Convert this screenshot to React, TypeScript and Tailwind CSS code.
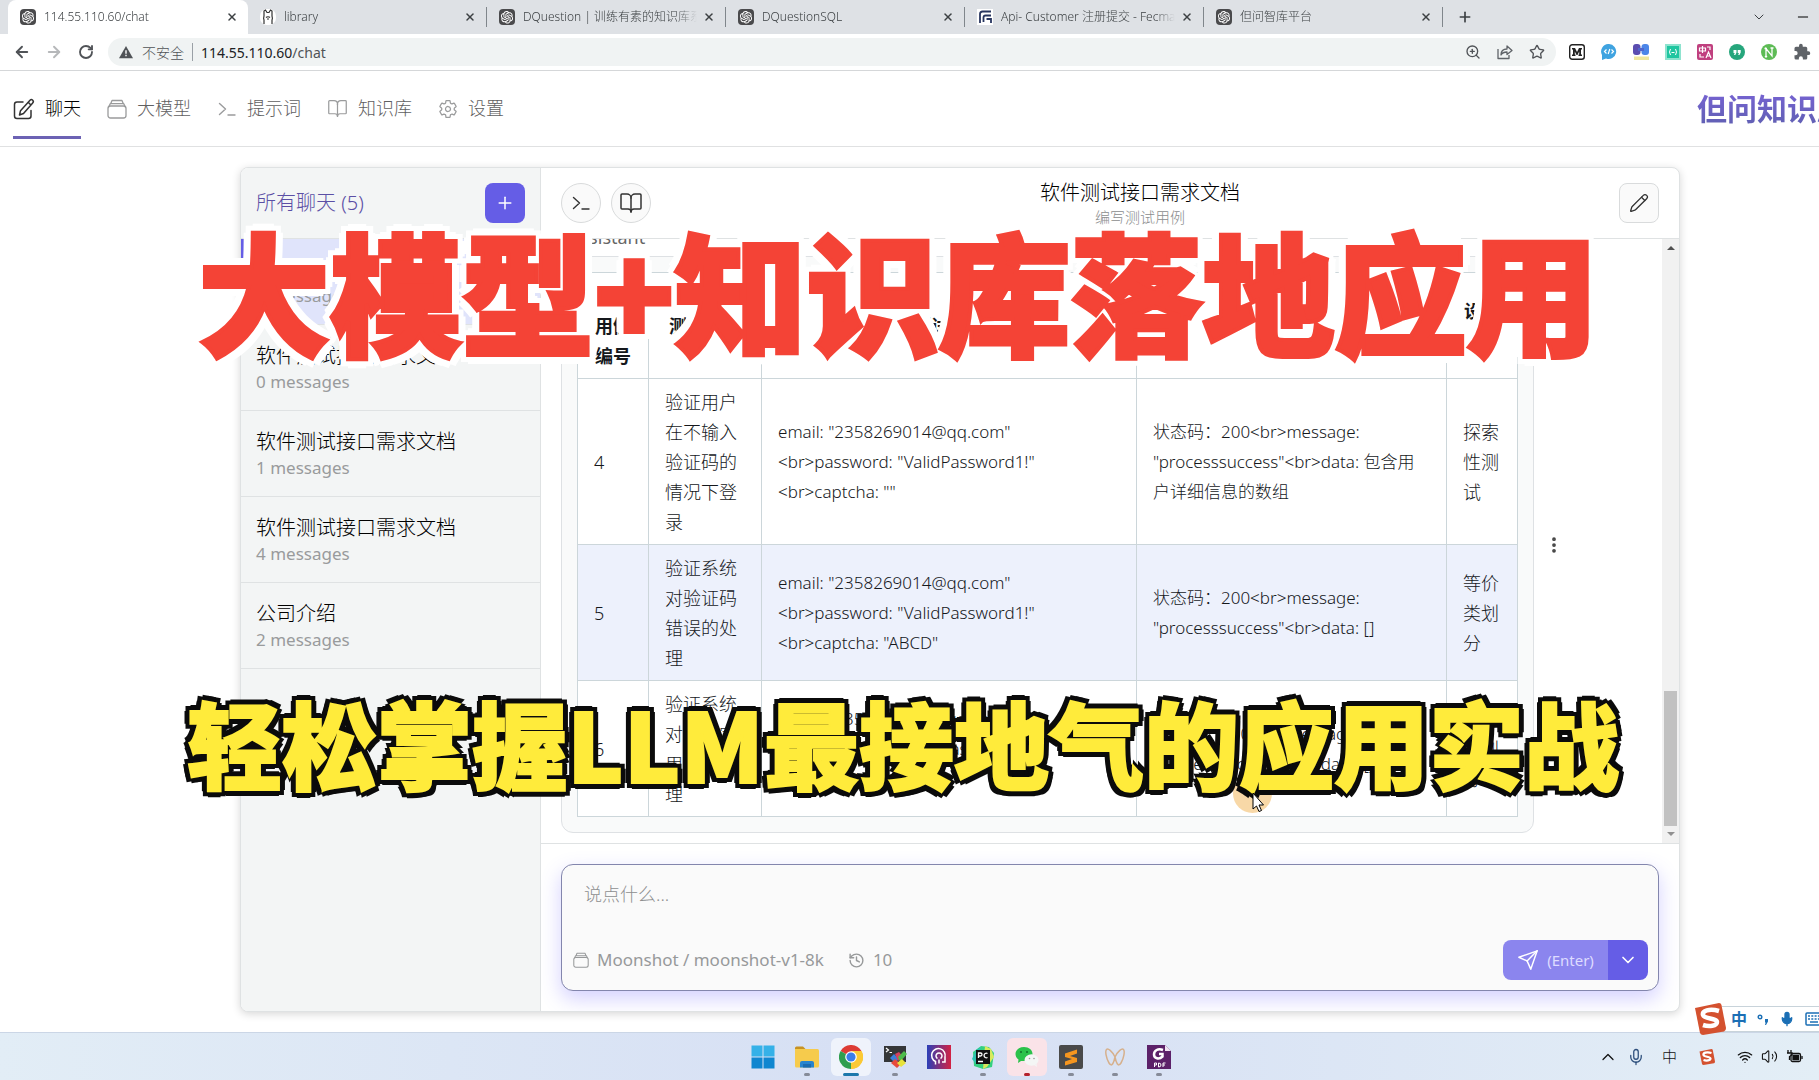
import React from 'react'
import {
    ArrowLeft,
    ArrowRight,
    BookOpen,
    ChevronDown,
    ChevronUp,
    EllipsisVertical,
    History,
    Mic,
    Minus,
    Pencil,
    Plus,
    RotateCw,
    SquarePen,
    Star,
    Volume2,
    Wifi,
    X,
    ZoomIn
} from 'lucide-react'
import { AiOutlineOpenAI } from 'react-icons/ai'
import { FiSend } from 'react-icons/fi'
import { IoSettingsOutline } from 'react-icons/io5'

const OpenAiBadge = () => (
    <span className="flex size-4 shrink-0 items-center justify-center rounded-sm bg-[#4a4a4c] text-white">
        <AiOutlineOpenAI className="size-4" />
    </span>
)

const LlamaBadge = () => (
    <svg viewBox="0 0 16 16" className="size-4 shrink-0">
        <rect width="16" height="16" rx="7" fill="#fff" />
        <path
            d="M4 15v-4c-1-2 0-3 0-4V2l1.500-1L7 3.500h2L10.500 1 12 2v5c0 1 1 2 0 4v4M6 8.500c1-1 3-1 4 0M7 10h2"
            fill="none"
            stroke="#333"
            strokeWidth="1.200"
        />
    </svg>
)

const ApiBadge = () => (
    <svg viewBox="0 0 16 16" className="size-4 shrink-0">
        <rect width="16" height="16" fill="#fff" />
        <path d="M3 14V5q0-2.500 2.500-2.500H14M6.500 13V8.500q0-2 2-2H14M9.500 10H14v4" fill="none" stroke="#27355f" strokeWidth="1.800" />
    </svg>
)

const tabs = [
    { title: '114.55.110.60/chat', icon: <OpenAiBadge />, active: true },
    { title: 'library', icon: <LlamaBadge /> },
    { title: 'DQuestion | 训练有素的知识库系统', icon: <OpenAiBadge /> },
    { title: 'DQuestionSQL', icon: <OpenAiBadge /> },
    { title: 'Api- Customer 注册提交 - Fecmall', icon: <ApiBadge /> },
    { title: '但问智库平台', icon: <OpenAiBadge /> }
]

function TabStrip() {
    return (
        <div className="flex h-[34px] items-stretch bg-[#dee1e5] pl-2 text-[12px] text-[#3c4043]">
            {tabs.map((tab, i) => (
                <div
                    key={tab.title}
                    className={
                        tab.active
                            ? 'flex w-60 items-center rounded-t-lg bg-white pr-2 pl-3'
                            : 'flex w-[239px] items-center pl-3'
                    }
                >
                    {tab.icon}
                    <span className="ml-2 flex-1 overflow-hidden whitespace-nowrap [mask-image:linear-gradient(to_right,#000_88%,transparent)]">
                        {tab.title}
                    </span>
                    <button aria-label="Close tab" className="ml-1 flex size-4 items-center justify-center">
                        <X className="size-3" strokeWidth={3} />
                    </button>
                    {i > 0 && <span className="ml-2 h-5 w-px bg-[#80868b]" />}
                </div>
            ))}
            <button aria-label="New tab" className="ml-[10px] flex w-6 items-center justify-center">
                <Plus className="size-4" strokeWidth={2.5} />
            </button>
            <div className="ml-auto flex items-center">
                <ChevronDown className="mr-7 size-4" strokeWidth={1.5} />
                <Minus className="mr-2 size-4 text-black" strokeWidth={1.5} />
            </div>
        </div>
    )
}

const ShareIcon = () => (
    <svg viewBox="0 0 16 16" className="size-4" fill="none" stroke="#5f6368" strokeWidth="1.300">
        <path d="M1 5v9.500h11V11M4 11c0-4 2-6 6-6V2l5 4.500-5 4V8c-3 0-5 1-6 3z" strokeLinejoin="round" />
    </svg>
)

function Extensions() {
    return (
        <div className="flex items-center gap-4">
            <svg viewBox="0 0 16 16" className="size-4">
                <rect x=".7" y=".7" width="14.600" height="14.600" rx="2.500" fill="#fff" stroke="#222" strokeWidth="1.400" />
                <path d="M3 4h3l2 4 2-4h3v1.500h-1v5h1V12H9.500v-1.500h.7V7.500L8.500 11h-1L5.800 7.500v3h.7V12H3v-1.500h1v-5H3z" fill="#222" />
            </svg>
            <svg viewBox="0 0 16 16" className="size-4">
                <path d="M8 0a7.500 7.500 0 1 1-3 14.500L1 16V11A7.500 7.500 0 0 1 8 0z" fill="#3fa3e0" />
                <path d="M5.500 5.500 3.500 7.500l2 2M10.500 5.500l2 2-2 2M8.800 5 7.200 10" fill="none" stroke="#fff" strokeWidth="1.200" />
            </svg>
            <svg viewBox="0 0 16 16" className="size-4">
                <rect width="7.500" height="11" rx="3" fill="#5b4db0" />
                <rect x="8.500" width="7.500" height="11" rx="3" fill="#4c86e8" />
                <rect x="5" y="4" width="6" height="3" fill="#5066cc" />
                <rect x="1" y="12.500" width="15" height="3.500" fill="#efe79d" />
            </svg>
            <svg viewBox="0 0 16 16" className="size-4">
                <rect width="16" height="16" fill="#8fe3cf" />
                <rect x="2" y="2" width="12" height="12" fill="#1fc6a0" />
                <path d="M5.500 5Q3.500 8 5.500 11M10.500 5q2 3 0 6M6.500 8.500h3" fill="none" stroke="#fff" />
            </svg>
            <svg viewBox="0 0 16 16" className="size-4">
                <rect width="16" height="16" rx="2" fill="#c0407f" />
                <path d="M2.500 4h6v3h-6zM5.500 2v7M9 14l2.500-6 2.500 6M10 12h3M10 3h3v3M3 10v3h4" fill="none" stroke="#fff" strokeWidth="1.200" />
            </svg>
            <svg viewBox="0 0 16 16" className="size-4">
                <circle cx="8" cy="8" r="8" fill="#26a67c" />
                <path d="M4.500 6h3v2.500L6.300 11H5l.7-2H4.500zM8.700 6h3v2.500L10.500 11H9.200l.7-2H8.700z" fill="#fff" />
            </svg>
            <svg viewBox="0 0 16 16" className="size-4">
                <circle cx="8" cy="8" r="8" fill="#5dbb55" />
                <path d="M5 12.500v-8l6 7.500V4M3.500 4.500H6M9.500 4h3M4 12l1 1 1-1" fill="none" stroke="#fff" strokeWidth="1.300" />
            </svg>
            <svg viewBox="0 0 24 24" className="size-[18px] fill-[#5f6368]">
                <path d="M20.500 11H19V7a2 2 0 0 0-2-2h-4V3.500a2.500 2.500 0 0 0-5 0V5H4a2 2 0 0 0-2 2v3.800h1.500a2.700 2.700 0 0 1 0 5.400H2V20a2 2 0 0 0 2 2h3.800v-1.500a2.700 2.700 0 0 1 5.400 0V22H17a2 2 0 0 0 2-2v-4h1.500a2.500 2.500 0 0 0 0-5z" />
            </svg>
        </div>
    )
}

function AddressBar() {
    return (
        <div className="flex h-[37px] items-center border-b border-[#d5d7d9] bg-white pr-2 pl-[13px] text-[#505357]">
            <button aria-label="Back">
                <ArrowLeft className="size-[18px]" strokeWidth={2.5} />
            </button>
            <button aria-label="Forward" className="ml-[14px] text-[#b6b8ba]">
                <ArrowRight className="size-[18px]" strokeWidth={2.5} />
            </button>
            <button aria-label="Reload" className="ml-[15px]">
                <RotateCw className="size-4" strokeWidth={2.8} />
            </button>
            <div className="ml-[14px] flex h-7 flex-1 items-center rounded-full bg-[#f0f3f3] px-[11px] text-[14px]">
                <svg viewBox="0 0 16 16" className="size-[14px]">
                    <path d="M8 1 16 15H0z" fill="#505357" />
                    <path d="M7.200 6h1.600v4H7.200zM7.200 11.200h1.600v1.600H7.200z" fill="#fff" />
                </svg>
                <span className="ml-[9px]">不安全</span>
                <span className="mx-2 h-[18px] w-px bg-[#9aa0a6]" />
                <span className="font-normal">
                    <span className="text-[#202124]">114.55.110.60</span>/chat
                </span>
                <div className="ml-auto flex items-center gap-4">
                    <ZoomIn className="size-4" />
                    <ShareIcon />
                    <Star className="size-4" />
                </div>
            </div>
            <div className="ml-[13px]">
                <Extensions />
            </div>
        </div>
    )
}

const ModelIcon = ({ className }: { className: string }) => (
    <svg viewBox="0 0 20 20" className={className} fill="none" stroke="currentColor" strokeWidth="1.300" strokeLinecap="round">
        <rect x="1" y="7" width="18" height="12" rx="2.500" />
        <path d="M2 7.500 3.200 4.700h13.600L18 7.500M3.800 4.500 5 1.500h10l1.200 3" strokeLinejoin="round" />
    </svg>
)

const PromptIcon = ({ className }: { className: string }) => (
    <svg viewBox="0 0 20 20" className={className} fill="none" stroke="currentColor" strokeWidth="1.400" strokeLinecap="round" strokeLinejoin="round">
        <path d="m2.500 4.500 6 5.500-6 5.500M11 16h7" />
    </svg>
)

// square with a broad rounded pencil across its corner
const ComposeIcon = ({ className }: { className: string }) => (
    <svg viewBox="0 0 22 22" className={className} fill="none" stroke="currentColor" strokeWidth="1.500" strokeLinecap="round" strokeLinejoin="round">
        <path d="M10 4H4a2.500 2.500 0 0 0-2.500 2.500V18A2.500 2.500 0 0 0 4 20.500h11.500A2.500 2.500 0 0 0 18 18v-5.500" />
        <path d="M17 2.200a1.900 1.900 0 0 1 2.700 2.700L10.500 15.500 6.500 17l1-4.300zM15.200 4.300l2.700 2.700" />
    </svg>
)

const navItems = [
    { label: '聊天', icon: <ComposeIcon className="size-[22px] text-[#333]" />, active: true },
    { label: '大模型', icon: <ModelIcon className="size-5" /> },
    { label: '提示词', icon: <PromptIcon className="size-5" /> },
    { label: '知识库', icon: <BookOpen className="size-[21px]" strokeWidth={1.4} /> },
    { label: '设置', icon: <IoSettingsOutline className="size-5" /> }
]

function Nav() {
    return (
        <nav className="flex h-[76px] items-center border-b border-[#e0e1e2] bg-white pl-[13px] text-[18px]">
            <div className="flex gap-[26px]">
                {navItems.map((item) => (
                    <a
                        key={item.label}
                        href="#"
                        className={
                            item.active
                                ? 'flex h-[60px] items-center gap-[10px] border-b-[3px] border-[#6c62b4] pt-[3px] text-black'
                                : 'flex h-[60px] items-center gap-[10px] border-b-[3px] border-transparent pt-[3px] text-[#5f6061]'
                        }
                    >
                        <span className={item.active ? '' : 'text-[#9a9b9c]'}>{item.icon}</span>
                        {item.label}
                    </a>
                ))}
            </div>
            <div className="ml-auto w-[122px] overflow-hidden bg-gradient-to-b from-[#7a63d8] to-[#5d5fae] bg-clip-text text-[30px] font-bold whitespace-nowrap text-transparent">
                但问知识库
            </div>
        </nav>
    )
}

const chats = [
    { title: '软件测试接口需求文档', count: 4, active: true },
    { title: '软件测试接口需求文档', count: 0 },
    { title: '软件测试接口需求文档', count: 1 },
    { title: '软件测试接口需求文档', count: 4 },
    { title: '公司介绍', count: 2 }
]

function Sidebar() {
    return (
        <aside className="flex w-[300px] shrink-0 flex-col border-r border-[#dfe2e3] bg-[#f3f5f5]">
            <div className="flex h-[71px] items-center justify-between border-b border-[#dfe2e3] px-[15px]">
                <h2 className="text-[20px] text-[#5b4fa5]">所有聊天 (5)</h2>
                <button aria-label="New chat" className="flex size-10 items-center justify-center rounded-lg bg-[#655de6] text-white">
                    <Plus className="size-5" strokeWidth={1.8} />
                </button>
            </div>
            {chats.map((chat, i) => (
                <a
                    key={i}
                    href="#"
                    className={
                        chat.active
                            ? 'block border-b border-l-[3px] border-b-[#dfe2e3] border-l-[#655de6] bg-[#e0e4fb] py-4 pr-4 pl-3'
                            : 'block border-b border-[#dfe2e3] py-4 pr-4 pl-[15px]'
                    }
                >
                    <div className="text-[20px] leading-[29px] text-black">{chat.title}</div>
                    <div className="text-[17px] leading-6 font-normal text-[#999b9c]">{chat.count} messages</div>
                </a>
            ))}
        </aside>
    )
}

const columns = ['测试用例编号', '测试标题', '测试数据', '预期结果', '设计方法']

const cases = [
    {
        id: 4,
        title: '验证用户在不输入验证码的情况下登录',
        input: ['email: "2358269014@qq.com"', '<br>password: "ValidPassword1!"', '<br>captcha: ""'],
        expected: ['状态码：200<br>message:', '"processsuccess"<br>data: 包含用', '户详细信息的数组'],
        method: '探索性测试'
    },
    {
        id: 5,
        title: '验证系统对验证码错误的处理',
        input: ['email: "2358269014@qq.com"', '<br>password: "ValidPassword1!"', '<br>captcha: "ABCD"'],
        expected: ['状态码：200<br>message:', '"processsuccess"<br>data: []'],
        method: '等价类划分'
    },
    {
        id: 6,
        title: '验证系统对已锁定用户的处理',
        input: ['email: "2358269014@qq.com"', '<br>password: "ValidPassword1!"', '<br>captcha: "ABCD"'],
        expected: ['状态码：200<br>message:', '"processsuccess"<br>data: []'],
        method: '等价类划分'
    }
]

const Lines = ({ items }: { items: string[] }) => (
    <>
        {items.map((line, i) => (
            <div key={i} className="whitespace-nowrap">
                {line}
            </div>
        ))}
    </>
)

function CaseTable() {
    return (
        <table className="w-full table-fixed border-collapse bg-white text-[18px] leading-[30px] text-[#15181c]">
            <colgroup>
                <col className="w-[71px]" />
                <col className="w-[113px]" />
                <col className="w-[375px]" />
                <col />
                <col className="w-[71px]" />
            </colgroup>
            <thead>
                <tr>
                    {columns.map((name) => (
                        <th key={name} className="border border-[#ccd6da] px-[15px] pt-2 pb-[7px] font-bold">
                            {name}
                        </th>
                    ))}
                </tr>
            </thead>
            <tbody className="[&_td]:border [&_td]:border-[#ccd6da] [&_td]:px-4 [&_td]:pt-2 [&_td]:pb-[7px]">
                {cases.map((row) => (
                    <tr key={row.id} className="even:bg-[#edf1fc]">
                        <td>{row.id}</td>
                        <td>{row.title}</td>
                        <td className="text-[17px]">
                            <Lines items={row.input} />
                        </td>
                        <td className="text-[17px]">
                            <Lines items={row.expected} />
                        </td>
                        <td>{row.method}</td>
                    </tr>
                ))}
            </tbody>
        </table>
    )
}

function ChatHeader() {
    return (
        <header className="flex h-[71px] shrink-0 items-center gap-[10px] border-b border-[#dfe2e3] px-5">
            <button aria-label="Prompt" className="flex size-10 items-center justify-center rounded-full border border-[#d9dbdc] bg-[#fafafa] text-[#333]">
                <PromptIcon className="size-5" />
            </button>
            <button aria-label="Knowledge base" className="flex size-10 items-center justify-center rounded-full border border-[#d9dbdc] bg-[#fafafa] text-[#333]">
                <BookOpen className="size-6" strokeWidth={1.5} />
            </button>
            <div className="-mr-[10px] flex-1 text-center">
                <h1 className="text-[20px] leading-7 text-black">软件测试接口需求文档</h1>
                <p className="text-[15px] leading-5 text-[#8b8d8e]">编写测试用例</p>
            </div>
            <button aria-label="Edit" className="flex size-10 items-center justify-center rounded-lg border border-[#d9dbdc] bg-[#fafafa] text-[#333]">
                <Pencil className="size-5" strokeWidth={1.6} />
            </button>
        </header>
    )
}

function Messages() {
    return (
        <div className="flex min-h-0 flex-1">
            <div className="flex flex-1 flex-col justify-end overflow-hidden pb-[10px] pl-5">
                <div className="mb-[7px] pl-2 text-[18px] leading-6 font-normal text-[#666]">Assistant</div>
                <div className="flex items-center pr-[98px]">
                    <div className="flex-1 rounded-xl border border-[#dee1e4] bg-[#f9fafa] p-[15px]">
                        <CaseTable />
                    </div>
                    <button aria-label="More" className="ml-[10px] text-[#444]">
                        <EllipsisVertical className="size-5" strokeWidth={2.5} />
                    </button>
                </div>
            </div>
            <div className="flex w-[17px] flex-col items-center bg-[#f1f1f1] py-1">
                <svg viewBox="0 0 8 8" className="mt-px size-2">
                    <path d="M0 6 4 2l4 4z" fill="#505050" />
                </svg>
                <div className="mt-auto mb-1 h-[135px] w-[13px] bg-[#c1c1c1]" />
                <svg viewBox="0 0 8 8" className="mb-px size-2">
                    <path d="M0 2 4 6l4-4z" fill="#909090" />
                </svg>
            </div>
        </div>
    )
}

function Composer() {
    return (
        <div className="border-t border-[#dfe2e3] px-5 pt-5 pb-5">
            <div className="flex h-[127px] flex-col rounded-xl border border-[#8386ad] bg-[#fafafa] p-[10px] shadow-[0_8px_20px_rgba(99,91,255,0.28)]">
                <textarea
                    aria-label="说点什么..."
                    placeholder="说点什么..."
                    className="w-full flex-1 resize-none bg-transparent px-3 pt-[5px] text-[18px] leading-7 outline-none placeholder:text-[#8e8f90]"
                />
                <div className="flex items-center text-[17px] font-normal text-[#97999a]">
                    <button className="flex items-center gap-2">
                        <ModelIcon className="ml-px size-4" />
                        <span>
                            Moonshot&nbsp;/&nbsp;moonshot-v1-8k
                        </span>
                    </button>
                    <button className="ml-6 flex items-center gap-2">
                        <History className="size-[17px]" />
                        10
                    </button>
                    <button className="ml-auto flex h-10 w-[105px] items-center justify-center gap-2 rounded-l-lg bg-[#8b85ee] text-[15px] text-[#dedcff]">
                        <FiSend className="size-[22px] text-white" strokeWidth={1.6} />
                        (Enter)
                    </button>
                    <button aria-label="Send options" className="flex h-10 w-10 items-center justify-center rounded-r-lg bg-[#655de6] text-white">
                        <ChevronDown className="size-5" />
                    </button>
                </div>
            </div>
        </div>
    )
}

const SogouLogo = ({ className }: { className: string }) => (
    <svg viewBox="0 0 32 32" className={className}>
        <path d="m1 5 24-5q2 0 2.500 2L32 25q0 3-2 3.500L9 32q-2 0-3-2z" fill="#d4512f" />
        <path d="M25 8C15 5 8 8 9 12s14 3 14 7-8 5-14 3" fill="none" stroke="#fff" strokeWidth="4.500" />
    </svg>
)

const KeyboardIcon = () => (
    <svg viewBox="0 0 18 14" className="h-[14px] w-[18px] shrink-0" fill="none" stroke="#1b6fb5" strokeWidth="1.500">
        <rect x="1" y="1" width="16" height="12" rx="1" />
        <path d="M3 4h12M3 7h12" strokeDasharray="2 1.300" />
        <path d="M5 10h8" />
    </svg>
)

function ImeBar() {
    return (
        <div className="absolute right-0 bottom-12 flex h-[26px] w-[97px] items-center gap-[10px] border-y border-[#c8d3da] bg-white pl-[9px] text-[#1b6fb5]">
            <SogouLogo className="absolute -bottom-1 -left-7 size-8" />
            <span className="text-[16px] leading-none font-bold">中</span>
            <svg viewBox="0 0 12 12" className="size-3 shrink-0">
                <circle cx="3" cy="4" r="1.800" fill="none" stroke="#1b6fb5" strokeWidth="1.400" />
                <path d="M8 6h3v2.500L9 12H8l.7-2.500H8z" fill="#1b6fb5" />
            </svg>
            <Mic className="size-4 shrink-0" fill="currentColor" />
            <KeyboardIcon />
        </div>
    )
}

const apps = [
    {
        name: 'Start',
        icon: (
            <svg viewBox="0 0 24 24" className="size-6">
                <path d="M.5.5h11v11H.5zM12.500.5h11v11h-11z" fill="#35b1e8" />
                <path d="M.5 12.500h11v11H.5zM12.500 12.500h11v11h-11z" fill="#0f86d0" />
            </svg>
        )
    },
    {
        name: 'Files',
        running: true,
        icon: (
            <svg viewBox="0 0 24 24" className="size-6">
                <path d="M0 3q0-1.500 1.500-1.500H8L10.500 4H0z" fill="#c79223" />
                <path d="M0 4h22.500q1.500 0 1.500 1.500V21q0 1.500-1.500 1.500h-21Q0 22.500 0 21z" fill="#f6cb4c" />
                <path d="M5 22.500V18q0-2 2-2h10q2 0 2 2v4.500z" fill="#2784cf" />
                <path d="M8 19h8v3.500H8z" fill="#1a6bb0" />
            </svg>
        )
    },
    {
        name: 'Chrome',
        current: true,
        icon: (
            <svg viewBox="0 0 24 24" className="size-6">
                <path d="M12 12 1.600 6A12 12 0 0 1 22.400 6z" fill="#dd3b34" />
                <path d="M12 12 22.400 6A12 12 0 0 1 12 24z" fill="#fbc934" />
                <path d="M12 12v12A12 12 0 0 1 1.600 6z" fill="#2f9e4f" />
                <path d="M12 6h10.400A12 12 0 0 1 12 24l5-9z" fill="#fbc934" />
                <circle cx="12" cy="12" r="5.800" fill="#fff" />
                <circle cx="12" cy="12" r="4.600" fill="#3b7de9" />
            </svg>
        )
    },
    {
        name: 'Terminal',
        running: true,
        icon: (
            <svg viewBox="0 0 24 24" className="size-6">
                <rect x="1" y="1" width="22" height="16" fill="#343638" />
                <path d="m3 3 2.500 2L3 7M6.500 7.500H9" fill="none" stroke="#fff" strokeWidth="1.200" />
                <path d="m7 13 4-4 5 5-4 4z" fill="#3b7edb" />
                <path d="m12 9 4-2 4 5-5 4z" fill="#d6405f" />
                <path d="m15 12 6-6 3 3-7 8z" fill="#4cbc4b" />
                <path d="m8 18 4-4 6 5-4 4z" fill="#e64a3c" />
                <path d="m14 18 5-4 4 4-5 4z" fill="#e7e23b" />
            </svg>
        )
    },
    {
        name: 'Assistant',
        icon: (
            <svg viewBox="0 0 24 24" className="size-6">
                <defs>
                    <linearGradient id="assistantBg">
                        <stop offset="0" stopColor="#2b3fb8" />
                        <stop offset="1" stopColor="#d32243" />
                    </linearGradient>
                </defs>
                <rect width="24" height="24" fill="url(#assistantBg)" />
                <path d="M8.500 19.500v-3A6.800 6.800 0 1 1 18 12v5h-3" fill="none" stroke="#fff" strokeWidth="1.500" />
                <path d="M12 18.500v-4m-1.500-1a3 3 0 1 1 3 0" fill="none" stroke="#fff" strokeWidth="1.500" />
            </svg>
        )
    },
    {
        name: 'PyCharm',
        running: true,
        icon: (
            <svg viewBox="0 0 24 24" className="size-6">
                <path d="m2 7 8-6 8 1 5 6-2 14-9 2-9-3z" fill="#35d07f" />
                <path d="m14 1 6 3 3 8-7 10-4 2z" fill="#d9ea5c" />
                <path d="m1 14 4-9 5-3-4 18z" fill="#2ec4b0" />
                <rect x="5" y="5" width="14" height="14" fill="#111" />
                <path d="M7.500 13V8h2a1.500 1.500 0 0 1 0 3h-2M16.500 8.500a2.300 2.300 0 1 0 0 4M7 16.500h5" fill="none" stroke="#fff" strokeWidth="1.300" />
            </svg>
        )
    },
    {
        name: 'WeChat',
        alert: true,
        icon: (
            <svg viewBox="0 0 24 24" className="size-6">
                <path d="M9 2c5 0 8.500 3 8.500 7S14 16 9 16l-3 0-3 2 .5-3.500C1.500 13 .5 11 .5 9 .5 5 4 2 9 2z" fill="#2bc24b" />
                <ellipse cx="16.500" cy="15" rx="7" ry="5.800" fill="#f4f6f5" />
                <path d="m19 20 3 2-.5-3z" fill="#f4f6f5" />
                <g fill="#12702a">
                    <circle cx="6" cy="7" r="1" />
                    <circle cx="12" cy="7" r="1" />
                </g>
                <g fill="#9a9a9a">
                    <circle cx="14.500" cy="13.500" r=".8" />
                    <circle cx="19" cy="13.500" r=".8" />
                </g>
            </svg>
        )
    },
    {
        name: 'Sublime',
        running: true,
        icon: (
            <svg viewBox="0 0 24 24" className="size-6">
                <rect width="24" height="24" rx="2" fill="#4a4a4a" />
                <path d="m6 8.500 12-4v4L11 11l7 2v4L6 20.500v-4l7-2.500-7-2z" fill="#f6961f" />
            </svg>
        )
    },
    {
        name: 'Notes',
        running: true,
        icon: (
            <svg viewBox="0 0 24 24" className="size-6" fill="none" stroke="#d6b08c" strokeWidth="1.500">
                <path d="M12 12C9 6 5 3 3.500 4.500S3 13 6 18s5-1 6-6zM12 12c3-6 7-9 8.500-7.500S21 13 18 18s-5-1-6-6z" />
            </svg>
        )
    },
    {
        name: 'PDF',
        running: true,
        icon: (
            <svg viewBox="0 0 24 24" className="size-6">
                <path d="M0 0h18l6 6v18H0z" fill="#5c2169" />
                <path d="M18 0v6h6z" fill="#efe3f2" />
                <path d="M16 5c-5-2-9 .5-9 4.500s5 5.500 8.500 2V9H12" fill="none" stroke="#fff" strokeWidth="2.500" />
                <path d="M7.500 22v-4H9.500v2h-2M11.500 18v4q2.500 0 2.500-2t-2.500-2M16 22v-4h2.500M16 20h2" fill="none" stroke="#fff" />
            </svg>
        )
    }
]

function Taskbar() {
    return (
        <footer className="relative flex h-12 shrink-0 items-center justify-center border-t border-[#cbd6e6] bg-gradient-to-r from-[#e2edf6] via-[#d6dff4] via-50% to-[#e3eef6]">
            {/* centred on the full desktop, which runs a little past the right edge */}
            <div className="-mr-[103px] flex gap-1">
                {apps.map((app) => (
                    <button
                        key={app.name}
                        aria-label={app.name}
                        className={
                            app.current
                                ? 'flex h-[38px] w-10 flex-col items-center rounded-md bg-[#eff3fb] pt-[7px]'
                                : app.alert
                                  ? 'flex h-[38px] w-10 flex-col items-center rounded-md bg-[#fae3e8] pt-[7px]'
                                  : 'flex h-[38px] w-10 flex-col items-center pt-[7px]'
                        }
                    >
                        {app.icon}
                        {app.current && <span className="mt-[4px] h-[3px] w-4 rounded-full bg-[#1d78ab]" />}
                        {app.alert && <span className="mt-[4px] h-[3px] w-[6px] rounded-full bg-[#b5202c]" />}
                        {app.running && <span className="mt-[4px] h-[3px] w-[6px] rounded-full bg-[#868b98]" />}
                    </button>
                ))}
            </div>
            <div className="absolute inset-y-0 right-4 flex items-center text-[#111]">
                <ChevronUp className="mr-[9px] size-5" strokeWidth={1.5} />
                <Mic className="mr-[17px] size-[18px] text-[#2d4f7c]" strokeWidth={1.7} />
                <span className="mr-[22px] text-[15px] leading-none">中</span>
                <SogouLogo className="mr-[22px] size-4" />
                <Wifi className="mr-2 size-4" />
                <Volume2 className="mr-2 size-[17px]" strokeWidth={1.5} />
                <svg viewBox="0 0 17 14" className="h-[14px] w-[17px]" fill="none" stroke="#111" strokeWidth="1.300">
                    <rect x="5" y="3.500" width="9.500" height="8" rx="1.500" />
                    <path d="M16 6v3M2 0v3M5 0v3M1 3h5v2L3.500 6.500V10" />
                    <path d="M7 5.500h5.500v4H7z" fill="#111" />
                </svg>
            </div>
            <ImeBar />
        </footer>
    )
}

function Captions() {
    return (
        <div className="pointer-events-none absolute inset-0 font-['Noto_Sans_CJK_SC',sans-serif] font-black whitespace-nowrap">
            <p className="absolute top-[223px] left-[198px] text-[132px] leading-[132px] text-[#f44336] [-webkit-text-stroke:4px_#f44336] [text-shadow:9px_0_#fff,-9px_0_#fff,0_9px_#fff,0_-9px_#fff,7px_7px_#fff,-7px_7px_#fff,7px_-7px_#fff,-7px_-7px_#fff,4px_0_#fff,-4px_0_#fff,0_4px_#fff,0_-4px_#fff]">
                大模型+知识库落地应用
            </p>
            <p className="absolute top-[694px] left-[187px] text-[95px] leading-[95px] text-[#ffeb3b] [-webkit-text-stroke:2px_#ffeb3b] [text-shadow:6px_0_#0b0b0b,-6px_0_#0b0b0b,0_6px_#0b0b0b,0_-6px_#0b0b0b,5px_5px_#0b0b0b,-5px_5px_#0b0b0b,5px_-5px_#0b0b0b,-5px_-5px_#0b0b0b,3px_0_#0b0b0b,-3px_0_#0b0b0b,0_3px_#0b0b0b,0_-3px_#0b0b0b]">
                轻松掌握LLM最接地气的应用实战
            </p>
        </div>
    )
}

function Cursor() {
    return (
        <>
            <span className="absolute top-[774px] left-[1233px] size-[39px] rounded-full bg-[#f4be6c]/60" />
            <svg viewBox="0 0 12 20" className="absolute top-[792px] left-[1252px] z-10 h-5 w-3">
                <path d="M1 1v16l3.500-3 2.500 5.500 2.500-1L7 13h4.500z" fill="#fff" stroke="#000" />
            </svg>
        </>
    )
}

export default function App() {
    return (
        <div className="relative flex h-screen flex-col overflow-hidden bg-white font-['Noto_Sans','Noto_Sans_CJK_SC',sans-serif] font-light">
            <TabStrip />
            <AddressBar />
            <Nav />
            <main className="flex min-h-0 flex-1 pt-5 pr-[139px] pb-5 pl-60">
                <div className="flex flex-1 overflow-hidden rounded-lg border border-[#dfe2e3] bg-white shadow-[0_2px_8px_rgba(0,0,0,0.16)]">
                    <Sidebar />
                    <section className="flex min-w-0 flex-1 flex-col">
                        <ChatHeader />
                        <Messages />
                        <Composer />
                    </section>
                </div>
            </main>
            <Taskbar />
            <Cursor />
            <Captions />
        </div>
    )
}
